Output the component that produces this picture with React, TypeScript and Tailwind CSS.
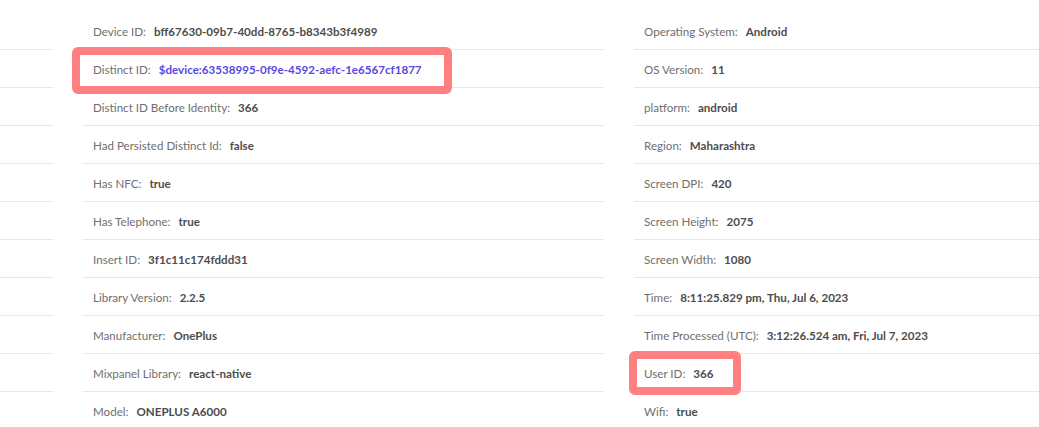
import React from "react";

type Prop = { label: string; value: string; link?: boolean; mark?: "wide" | "short" };

const middle: Prop[] = [
  { label: "Device ID:", value: "bff67630-09b7-40dd-8765-b8343b3f4989" },
  { label: "Distinct ID:", value: "$device:63538995-0f9e-4592-aefc-1e6567cf1877", link: true, mark: "wide" },
  { label: "Distinct ID Before Identity:", value: "366" },
  { label: "Had Persisted Distinct Id:", value: "false" },
  { label: "Has NFC:", value: "true" },
  { label: "Has Telephone:", value: "true" },
  { label: "Insert ID:", value: "3f1c11c174fddd31" },
  { label: "Library Version:", value: "2.2.5" },
  { label: "Manufacturer:", value: "OnePlus" },
  { label: "Mixpanel Library:", value: "react-native" },
  { label: "Model:", value: "ONEPLUS A6000" },
];

const right: Prop[] = [
  { label: "Operating System:", value: "Android" },
  { label: "OS Version:", value: "11" },
  { label: "platform:", value: "android" },
  { label: "Region:", value: "Maharashtra" },
  { label: "Screen DPI:", value: "420" },
  { label: "Screen Height:", value: "2075" },
  { label: "Screen Width:", value: "1080" },
  { label: "Time:", value: "8:11:25.829 pm, Thu, Jul 6, 2023" },
  { label: "Time Processed (UTC):", value: "3:12:26.524 am, Fri, Jul 7, 2023" },
  { label: "User ID:", value: "366", mark: "short" },
  { label: "Wifi:", value: "true" },
];

function Row({ p }: { p: Prop }) {
  return (
    <div className="relative flex h-[38px] items-center border-b border-[#e7e7e7] pl-[10px] pt-[2px]">
      <span className="text-[#6f6f6f]">{p.label}</span>
      <span className={`ml-[8px] font-bold ${p.link ? "text-[#5848e4]" : "text-[#4d4d4d]"}`}>
        {p.value}
      </span>
      {p.mark === "wide" && (
        <div className="pointer-events-none absolute left-[-11px] top-[-3px] h-[47px] w-[380px] rounded-[6px] border-[8px] border-[#ff8080]" />
      )}
      {p.mark === "short" && (
        <div className="pointer-events-none absolute left-[-5px] top-[-3px] h-[44px] w-[112px] rounded-[6px] border-[8px] border-[#ff8080]" />
      )}
    </div>
  );
}

export default function App() {
  return (
    <div
      className="flex h-[427px] w-[1039px] gap-[30px] overflow-hidden bg-white pt-[12px] text-[11.6px]"
      style={{ fontFamily: "Lato, 'Noto Sans', sans-serif" }}
    >
      <div className="w-[53px] shrink-0">
        {middle.map((_, i) => (
          <div key={i} className="h-[38px] border-b border-[#e7e7e7]" />
        ))}
      </div>
      <div className="w-[521px] shrink-0">
        {middle.map((p) => (
          <Row key={p.label} p={p} />
        ))}
      </div>
      <div className="flex-1">
        {right.map((p) => (
          <Row key={p.label} p={p} />
        ))}
      </div>
    </div>
  );
}
